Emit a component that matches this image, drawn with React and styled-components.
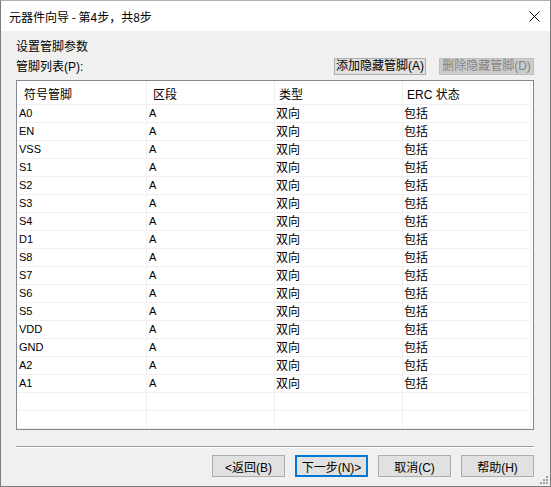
import React from "react";
import styled, { createGlobalStyle } from "styled-components";

const GlobalStyle = createGlobalStyle`
  html, body {
    margin: 0;
    padding: 0;
    background: #6b6b6b;
  }
  body {
    font-family: "Liberation Sans", "Noto Sans CJK SC", sans-serif;
    font-size: 12px;
    color: #000;
  }
`;

const pins = ["A0", "EN", "VSS", "S1", "S2", "S3", "S4", "D1", "S8", "S7", "S6", "S5", "VDD", "GND", "A2", "A1"];

const Window = styled.div`
  position: relative;
  width: 551px;
  height: 487px;
  box-sizing: border-box;
  border: 1px solid #7d7d7d;
  border-top-color: #b0b0b0;
  background: #f0f0f0;
  display: flex;
  flex-direction: column;
`;

const TitleBar = styled.div`
  height: 30px;
  flex: none;
  background: #fff;
  display: flex;
  align-items: center;
  justify-content: space-between;
  padding: 0 10px 0 8px;
  font-family: "Noto Sans CJK SC", sans-serif;
  font-size: 12px;
`;

const Body = styled.div`
  flex: 1;
  display: flex;
  flex-direction: column;
  padding: 0 16px 0 15px;
`;

const Heading = styled.div`
  margin-top: 8px;
  line-height: 16px;
  height: 16px;
`;

const Toolbar = styled.div`
  display: flex;
  align-items: center;
  height: 17px;
  margin-top: 3px;
`;

const Label = styled.div`
  flex: 1;
  line-height: 16px;
`;

const SmallButton = styled.button`
  height: 17px;
  box-sizing: border-box;
  padding: 0;
  font-family: "Liberation Sans", "Noto Sans CJK SC", sans-serif;
  font-size: 12px;
  line-height: 15px;
  width: ${(p) => p.$w}px;
  margin-left: ${(p) => p.$ml || 0}px;
  background: ${(p) => (p.disabled ? "#cccccc" : "#e1e1e1")};
  border: 1px solid ${(p) => (p.disabled ? "#bfbfbf" : "#adadad")};
  color: ${(p) => (p.disabled ? "#838383" : "#000")};
`;

const Table = styled.div`
  margin-top: 5px;
  height: 350px;
  box-sizing: border-box;
  border: 1px solid #828790;
  background: #fff;
  display: grid;
  grid-template-columns: 130px 128px 128px 128px 1fr;
  grid-template-rows: 24px;
  grid-auto-rows: 18px;
  overflow: hidden;
`;

const Cell = styled.div`
  box-sizing: border-box;
  border-bottom: ${(p) => (p.$spare ? "none" : "1px solid #f0f0f0")};
  border-right: ${(p) => (p.$spare ? "none" : "1px solid #f0f0f0")};
  padding-left: ${(p) => p.$pad ?? 2}px;
  padding-top: ${(p) => (p.$head ? 2 : 0)}px;
  padding-bottom: ${(p) => (p.$head ? 0 : 2)}px;
  display: flex;
  align-items: center;
  font-size: ${(p) => (p.$latin ? 11 : 12)}px;
  white-space: nowrap;
`;

const Separator = styled.div`
  margin-top: 16px;
  border-top: 1px solid #a0a0a0;
  border-bottom: 1px solid #fff;
`;

const Footer = styled.div`
  display: flex;
  justify-content: flex-end;
  gap: 10px;
  margin-top: 7px;
`;

const WizardButton = styled.button`
  width: 73px;
  height: 22px;
  box-sizing: border-box;
  padding: 0;
  font-family: "Liberation Sans", "Noto Sans CJK SC", sans-serif;
  font-size: 12px;
  background: #e1e1e1;
  border: ${(p) => (p.$focus ? "2px solid #0078d7" : "1px solid #adadad")};
  color: #000;
`;

const Grip = styled.svg`
  position: absolute;
  right: 1px;
  bottom: 1px;
`;

const CloseIcon = () => (
  <svg width="11" height="11" viewBox="0 0 11 11">
    <path d="M0.5 0.5 L10.5 10.5 M10.5 0.5 L0.5 10.5" stroke="#000" strokeWidth="1" fill="none" />
  </svg>
);

const headers = [
  ["符号管脚", 7],
  ["区段", 6],
  ["类型", 4],
  ["ERC 状态", 4],
];

export default function App() {
  return (
    <>
      <GlobalStyle />
      <Window>
        <TitleBar>
          <span>元器件向导 - 第4步，共8步</span>
          <CloseIcon />
        </TitleBar>
        <Body>
          <Heading>设置管脚参数</Heading>
          <Toolbar>
            <Label>管脚列表(P):</Label>
            <SmallButton $w={92}>添加隐藏管脚(A)</SmallButton>
            <SmallButton $w={95} $ml={13} disabled>
              删除隐藏管脚(D)
            </SmallButton>
          </Toolbar>
          <Table>
            {headers.map(([h, pad]) => (
              <Cell key={h} $head $pad={pad}>
                {h}
              </Cell>
            ))}
            <Cell $spare />
            {pins.map((p) => (
              <React.Fragment key={p}>
                <Cell $latin>{p}</Cell>
                <Cell $latin>A</Cell>
                <Cell $pad={1}>双向</Cell>
                <Cell $pad={1}>包括</Cell>
                <Cell $spare />
              </React.Fragment>
            ))}
            {[0, 1].map((i) => (
              <React.Fragment key={"e" + i}>
                <Cell />
                <Cell />
                <Cell />
                <Cell />
                <Cell $spare />
              </React.Fragment>
            ))}
          </Table>
          <Separator />
          <Footer>
            <WizardButton>&lt;返回(B)</WizardButton>
            <WizardButton $focus>下一步(N)&gt;</WizardButton>
            <WizardButton>取消(C)</WizardButton>
            <WizardButton>帮助(H)</WizardButton>
          </Footer>
        </Body>
        <Grip width="9" height="9" viewBox="0 0 9 9">
          <rect x="6" y="0" width="2" height="2" fill="#a0a0a0" />
          <rect x="3" y="3" width="2" height="2" fill="#a0a0a0" />
          <rect x="6" y="3" width="2" height="2" fill="#a0a0a0" />
          <rect x="0" y="6" width="2" height="2" fill="#a0a0a0" />
          <rect x="3" y="6" width="2" height="2" fill="#a0a0a0" />
          <rect x="6" y="6" width="2" height="2" fill="#a0a0a0" />
        </Grip>
      </Window>
    </>
  );
}
